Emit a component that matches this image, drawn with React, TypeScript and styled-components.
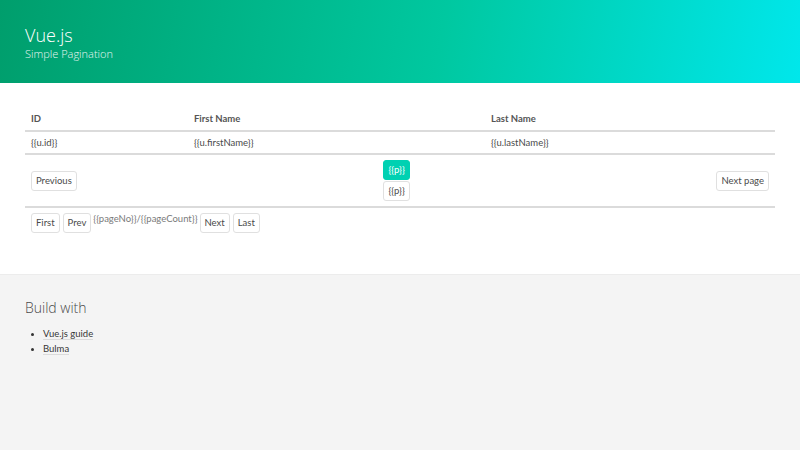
import React from 'react';
import styled, { createGlobalStyle } from 'styled-components';

const GlobalStyle = createGlobalStyle`
  html, body {
    margin: 0;
    padding: 0;
    background: #f4f4f4;
    font-family: Lato, "Open Sans", sans-serif;
    color: #4a4a4a;
  }
`;

const Hero = styled.header`
  height: 83px;
  padding: 24px 25px 0;
  box-sizing: border-box;
  background: linear-gradient(100deg, #009e6c 0%, #00c8a0 55%, #00e7eb 100%);
  color: #fff;
  font-family: "Open Sans", sans-serif;
`;

const Title = styled.h1`
  margin: 0;
  font-size: 18px;
  font-weight: 300;
  line-height: 22px;
`;

const Subtitle = styled.h2`
  margin: 1px 0 0;
  font-size: 11px;
  font-weight: 300;
  line-height: 14px;
  opacity: 0.9;
`;

const Section = styled.section`
  background: #fff;
  padding: 24px 25px 42px;
  height: 191px;
  box-sizing: border-box;
`;

const Table = styled.table`
  width: 750px;
  table-layout: fixed;
  border-collapse: collapse;
  font-size: 9.5px;
  color: #4a4a4a;
`;

const Th = styled.th<{ w?: number }>`
  text-align: left;
  font-weight: 700;
  color: #555;
  padding: 6px 6px 5px;
  line-height: 12px;
  border-bottom: 2px solid #dbdbdb;
  width: ${p => (p.w ? `${p.w}px` : 'auto')};
`;

const Td = styled.td`
  padding: 5px 6px 4px;
  line-height: 12px;
  border-bottom: 2px solid #dbdbdb;
`;

const NavCell = styled.td`
  padding: 5px 6px 5px;
  border-bottom: 2px solid #dbdbdb;
`;

const Nav = styled.nav`
  display: flex;
  align-items: center;
  justify-content: space-between;
`;

const PageList = styled.ul`
  list-style: none;
  margin: 0;
  padding: 0;
  display: flex;
  flex-direction: column;
  gap: 1px;
  li {
    display: flex;
  }
`;

const Button = styled.button<{ active?: boolean }>`
  font-family: inherit;
  font-size: 9.5px;
  height: 20px;
  padding: 0 4px;
  border: 1px solid ${p => (p.active ? '#00d1b2' : '#e0e0e0')};
  background: ${p => (p.active ? '#00d1b2' : '#fff')};
  color: ${p => (p.active ? '#fff' : '#4a4a4a')};
  border-radius: 3px;
  line-height: 18px;
  cursor: pointer;
`;

const PagerRow = styled.div`
  display: flex;
  align-items: flex-start;
  gap: 3px;
  padding: 5px 6px 0;
`;

const PageText = styled.span`
  font-size: 9.5px;
  color: #7a7a7a;
  line-height: 12px;
  margin: 0 -1px;
`;

const Footer = styled.footer`
  background: #f4f4f4;
  border-top: 1px solid #ececec;
  padding: 24px 25px;
  height: 176px;
  box-sizing: border-box;
  font-family: "Open Sans", sans-serif;
`;

const FooterTitle = styled.h3`
  margin: 0 0 9px;
  font-size: 14px;
  font-weight: 300;
  color: #4a4a4a;
  line-height: 18px;
`;

const LinkList = styled.ul`
  margin: 0;
  padding-left: 18px;
  font-size: 9.5px;
  line-height: 15px;
  font-family: Lato, sans-serif;
  li::marker {
    font-size: 8px;
    color: #333;
  }
`;

const Link = styled.a`
  color: #363636;
  text-decoration: none;
  border-bottom: 1px solid #dbdbdb;
`;

export default function App() {
  return (
    <>
      <GlobalStyle />
      <Hero>
        <Title>Vue.js</Title>
        <Subtitle>Simple Pagination</Subtitle>
      </Hero>
      <Section>
        <Table>
          <thead>
            <tr>
              <Th w={151}>ID</Th>
              <Th w={285}>First Name</Th>
              <Th>Last Name</Th>
            </tr>
          </thead>
          <tbody>
            <tr>
              <Td>{'{{u.id}}'}</Td>
              <Td>{'{{u.firstName}}'}</Td>
              <Td>{'{{u.lastName}}'}</Td>
            </tr>
            <tr>
              <NavCell colSpan={3}>
                <Nav>
                  <Button>Previous</Button>
                  <PageList>
                    <li><Button active>{'{{p}}'}</Button></li>
                    <li><Button>{'{{p}}'}</Button></li>
                  </PageList>
                  <Button>Next page</Button>
                </Nav>
              </NavCell>
            </tr>
          </tbody>
        </Table>
        <PagerRow>
          <Button>First</Button>
          <Button>Prev</Button>
          <PageText>{'{{pageNo}}/{{pageCount}}'}</PageText>
          <Button>Next</Button>
          <Button>Last</Button>
        </PagerRow>
      </Section>
      <Footer>
        <FooterTitle>Build with</FooterTitle>
        <LinkList>
          <li><Link href="#">Vue.js guide</Link></li>
          <li><Link href="#">Bulma</Link></li>
        </LinkList>
      </Footer>
    </>
  );
}
